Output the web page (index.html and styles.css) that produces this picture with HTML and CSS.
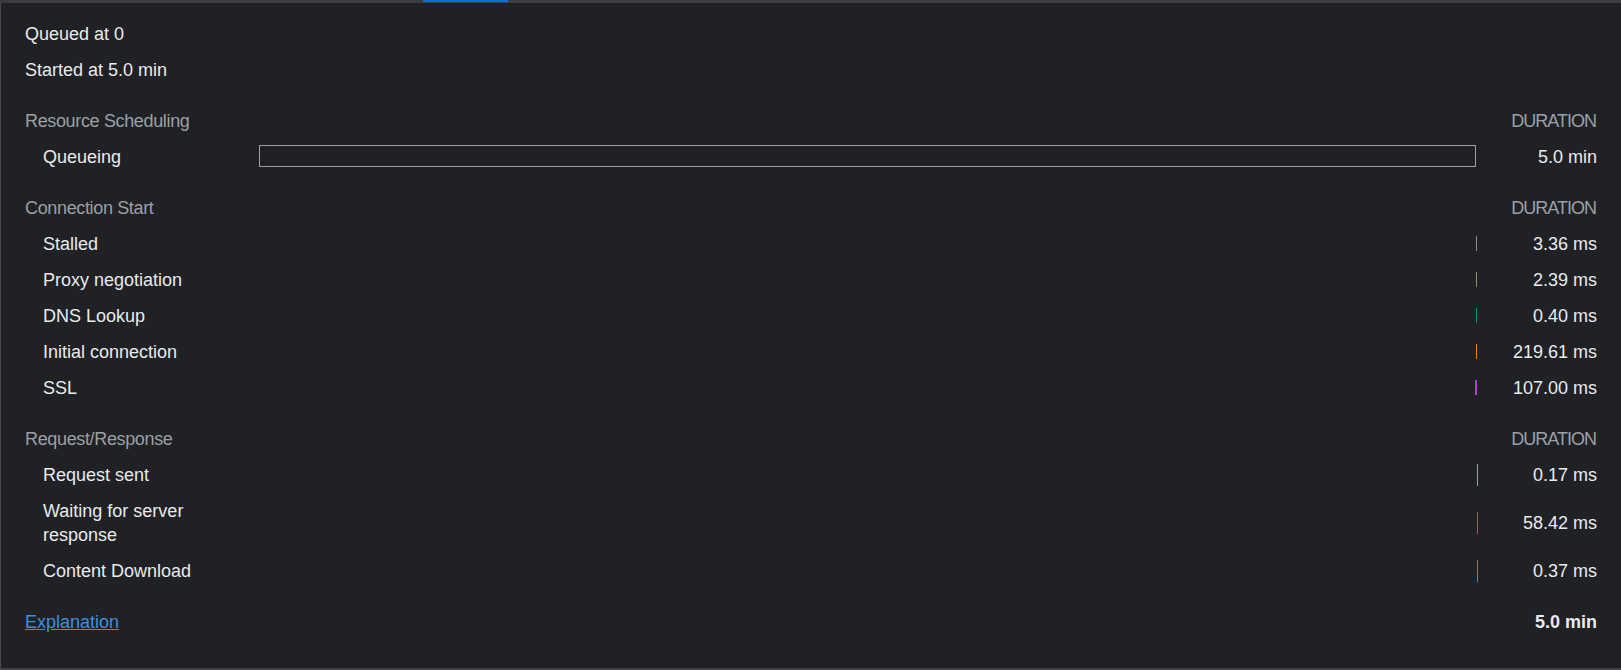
FILE: index.html
```html
<!DOCTYPE html>
<html lang="en">
<head>
<meta charset="utf-8">
<title>Timing</title>
<link rel="stylesheet" href="styles.css">
</head>
<body>
<div class="tabstrip"><span class="tab-spacer"></span><span class="tab-indicator"></span></div>
<main class="panel">
  <div class="meta">Queued at 0</div>
  <div class="meta">Started at 5.0 min</div>

  <section class="group">
    <div class="row header"><span class="title">Resource Scheduling</span><span></span><span class="dur">DURATION</span></div>
    <div class="row"><span class="label">Queueing</span><span class="track"><span class="queue-bar"></span></span><span class="val">5.0 min</span></div>
  </section>

  <section class="group">
    <div class="row header"><span class="title">Connection Start</span><span></span><span class="dur">DURATION</span></div>
    <div class="row"><span class="label">Stalled</span><span class="track"><span class="tick short stalled"></span></span><span class="val">3.36 ms</span></div>
    <div class="row"><span class="label">Proxy negotiation</span><span class="track"><span class="tick short proxy"></span></span><span class="val">2.39 ms</span></div>
    <div class="row"><span class="label">DNS Lookup</span><span class="track"><span class="tick short dns"></span></span><span class="val">0.40 ms</span></div>
    <div class="row"><span class="label">Initial connection</span><span class="track"><span class="tick short connect"></span></span><span class="val">219.61 ms</span></div>
    <div class="row"><span class="label">SSL</span><span class="track"><span class="tick short ssl"></span></span><span class="val">107.00 ms</span></div>
  </section>

  <section class="group">
    <div class="row header"><span class="title">Request/Response</span><span></span><span class="dur">DURATION</span></div>
    <div class="row"><span class="label">Request sent</span><span class="track"><span class="tick tall sending"></span></span><span class="val">0.17 ms</span></div>
    <div class="row"><span class="label">Waiting for server response</span><span class="track"><span class="tick tall waiting"></span></span><span class="val">58.42 ms</span></div>
    <div class="row"><span class="label">Content Download</span><span class="track"><span class="tick tall receiving"></span></span><span class="val">0.37 ms</span></div>
  </section>

  <div class="row footer"><a class="link" href="#">Explanation</a><span></span><span class="val total">5.0 min</span></div>
</main>
</body>
</html>
```
FILE: styles.css
```css
html, body {
  margin: 0;
  padding: 0;
  background: #202124;
  height: 670px;
  overflow: hidden;
}

body {
  font-family: "Liberation Sans", Arial, sans-serif;
  font-size: 18px;
  line-height: 24px;
  color: #e8eaed;
}

.tabstrip {
  display: flex;
  height: 3px;
  background: #3c3c3c;
}

.tab-spacer {
  width: 423px;
}

.tab-indicator {
  width: 85px;
  height: 2px;
  background: #0a6fd8;
}

.panel {
  box-sizing: border-box;
  height: 667px;
  border-left: 1px solid #45474b;
  border-bottom: 2px solid #3f4144;
  padding: 13px 24px 0 24px;
}

.meta {
  height: 36px;
  display: flex;
  align-items: center;
}

.group {
  margin-top: 15px;
}

.row {
  display: grid;
  grid-template-columns: 234px 1fr 121px;
  align-items: center;
  min-height: 36px;
}

.header {
  color: #9aa0a6;
}

.title {
  letter-spacing: -0.35px;
}

.dur {
  text-align: right;
  letter-spacing: -1px;
  margin-right: 1px;
}

.label {
  padding-left: 18px;
  max-width: 180px;
  padding-top: 6px;
  padding-bottom: 6px;
}

.val {
  text-align: right;
}

.track {
  display: flex;
  justify-content: flex-end;
  align-items: center;
  height: 36px;
}

.queue-bar {
  box-sizing: border-box;
  width: 100%;
  height: 22px;
  border: 1px solid #a0a0a0;
  margin-top: -2px;
}

.tick {
  display: block;
  width: 1px;
  flex: none;
}

.tick.short {
  height: 15px;
  margin-right: -1px;
  margin-top: -1px;
}

.tick.tall {
  height: 22px;
  margin-right: -2px;
}

.stalled { background: #8f8f8f; }
.proxy { background: #a1887f; }
.dns { background: #009688; }
.connect { background: #e08e00; }
.ssl { background: #b43ccc; width: 2px; }
.sending { background: #9aa0a6; }
.waiting { background: #1e9e4a; }
.receiving { background: #2a8fd6; }

.footer {
  margin-top: 15px;
}

.link {
  color: #3d8fe0;
  text-decoration: underline;
  justify-self: start;
}

.total {
  font-weight: bold;
}
```
